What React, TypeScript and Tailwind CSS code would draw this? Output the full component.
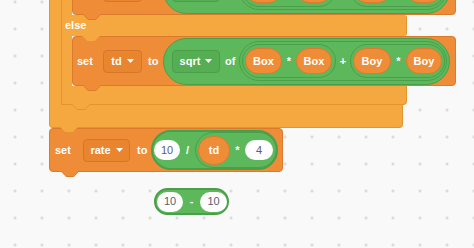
import clsx from 'clsx';
import * as React from 'react';

type Kids = { className?: string; children?: React.ReactNode };

function Word({ className, children }: Kids) {
  return (
    <span className={clsx('shrink-0 whitespace-nowrap text-[11px] font-bold leading-none text-white', className)}>
      {children}
    </span>
  );
}

function Op({ className, children }: Kids) {
  return (
    <span className={clsx('shrink-0 text-center text-[11px] font-bold leading-none text-white', className)}>
      {children}
    </span>
  );
}

function Dropdown({ label, className }: { label: string; className?: string }) {
  return (
    <div
      className={clsx(
        'flex h-[23px] shrink-0 items-center justify-center gap-[5px] rounded-[4px] border',
        className,
      )}
    >
      <span className="text-[11px] font-bold leading-none text-white">{label}</span>
      <svg width="7" height="4" viewBox="0 0 7 4">
        <path d="M0 0h7L3.5 4z" fill="#fff" />
      </svg>
    </div>
  );
}

function VarPill({ className, children }: Kids) {
  return (
    <div
      className={clsx(
        'flex shrink-0 items-center justify-center rounded-full border border-[#dc7b2d] bg-[#ef8c38] text-[11px] font-bold leading-none text-white',
        className,
      )}
    >
      {children}
    </div>
  );
}

function NumPill({ className, children }: Kids) {
  return (
    <div
      className={clsx(
        'flex h-[20px] shrink-0 items-center justify-center rounded-full bg-white text-[11px] leading-none text-[#575e75]',
        className,
      )}
    >
      {children}
    </div>
  );
}

// the little connector tab under a stack block, drawn over the next block
function Tab({ className, control }: { className?: string; control?: boolean }) {
  const fill = control ? '#f5a83f' : '#ef8c38';
  const stroke = control ? '#e0962f' : '#d97a2c';
  return (
    <svg width="18" height="6" viewBox="0 0 18 6" className={clsx('absolute top-full z-10', className)}>
      <path d="M0 0L4.2 4.6Q4.8 5.5 5.8 5.5H12.2Q13.2 5.5 13.8 4.6L18 0Z" fill={fill} />
      <path d="M0.4 0.4L4.2 4.6Q4.8 5.5 5.8 5.5H12.2Q13.2 5.5 13.8 4.6L17.6 0.4" fill="none" stroke={stroke} />
    </svg>
  );
}

function SetDistance() {
  return (
    <div className="relative flex h-[50px] w-[384px] shrink-0 items-center rounded-[4px] border border-[#d97a2c] bg-[#ef8c38] pl-[4px]">
      <Word className="w-[15px]">set</Word>
      <Dropdown label="td" className="ml-[11px] w-[39px] border-[#d5772b] bg-[#e9852f]" />
      <Word className="ml-[6px] w-[9px]">to</Word>
      <div className="ml-[6px] flex h-[47px] w-[287px] shrink-0 items-center rounded-full border border-[#4c9f4a] bg-[#5cb85b] pl-[8px]">
        <Dropdown label="sqrt" className="w-[48px] border-[#4c9f4a] bg-[#55ad54]" />
        <Word className="ml-[5px] w-[10px]">of</Word>
        <div className="ml-[4px] flex h-[40px] w-[208px] shrink-0 items-center rounded-full border border-[#4c9f4a] pl-[2px]">
          <div className="flex h-[34px] w-[94px] shrink-0 items-center rounded-full border border-[#4c9f4a] pl-[2px]">
            <VarPill className="h-[26px] w-[37px]">Box</VarPill>
            <Op className="w-[14px]">*</Op>
            <VarPill className="h-[26px] w-[36px]">Box</VarPill>
          </div>
          <Op className="w-[14px]">+</Op>
          <div className="flex h-[34px] w-[95px] shrink-0 items-center rounded-full border border-[#4c9f4a] pl-[2px]">
            <VarPill className="h-[26px] w-[38px]">Boy</VarPill>
            <Op className="w-[15px]">*</Op>
            <VarPill className="h-[26px] w-[36px]">Boy</VarPill>
          </div>
        </div>
      </div>
      <Tab className="left-[10px]" />
    </div>
  );
}

export default function App() {
  return (
    <div className="flex h-[248px] w-[474px] flex-col items-start overflow-hidden bg-[#f9f9f9] bg-[radial-gradient(circle,#d6d6d6_1px,transparent_1.6px)] bg-[length:27px_27px] bg-[position:1.5px_15.5px] pl-[49px] font-['Liberation_Sans',Arial,sans-serif]">
      <div className="-mt-[35px] flex flex-col items-start">
        {/* outer C block */}
        <div className="flex">
          <div className="w-[12px] shrink-0 border-l border-[#e0962f] bg-[#f5a83f]" />
          {/* inner if / else block */}
          <div className="flex flex-col items-start border-l border-[#e0962f]">
            <div className="flex">
              <div className="w-[10px] shrink-0 bg-[#f5a83f]" />
              <SetDistance />
            </div>
            <div className="relative flex h-[21px] w-[345px] items-center rounded-r-[3px] border-r border-[#e0962f] bg-[#f5a83f] pl-[3px]">
              <Word>else</Word>
              <Tab className="left-[20px]" control />
            </div>
            <div className="flex">
              <div className="w-[10px] shrink-0 bg-[#f5a83f]" />
              <SetDistance />
            </div>
            <div className="relative h-[19px] w-[345px] rounded-br-[4px] border-r border-b border-[#e0962f] bg-[#f5a83f]">
              <Tab className="left-[10px]" control />
            </div>
          </div>
        </div>
        <div className="relative h-[23px] w-[354px] rounded-b-[4px] border border-t-0 border-[#e0962f] bg-[#f5a83f]">
          <Tab className="left-[10px]" control />
        </div>

        <div className="relative flex h-[44px] w-[234px] items-center rounded-[4px] border border-[#d97a2c] bg-[#ef8c38] pl-[5px]">
          <Word className="w-[15px]">set</Word>
          <Dropdown label="rate" className="ml-[13px] w-[47px] border-[#d5772b] bg-[#e9852f]" />
          <Word className="ml-[7px] w-[10px]">to</Word>
          <div className="ml-[4px] flex h-[40px] w-[127px] shrink-0 items-center rounded-full border-2 border-[#4c9f4a] bg-[#5cb85b] pl-[1px]">
            <NumPill className="w-[26px]">10</NumPill>
            <Op className="w-[15px]">/</Op>
            <div className="flex h-[36px] w-[82px] shrink-0 items-center rounded-full border border-[#4c9f4a] pl-[2px]">
              <VarPill className="h-[29px] w-[32px]">td</VarPill>
              <Op className="w-[15px]">*</Op>
              <NumPill className="w-[28px]">4</NumPill>
            </div>
          </div>
          <Tab className="left-[11px]" />
        </div>

        <div className="ml-[105px] mt-[16px] flex h-[27px] w-[75px] items-center rounded-full border-2 border-[#4c9f4a] bg-[#5cb85b] pl-[1px]">
          <NumPill className="w-[26px]">10</NumPill>
          <Op className="w-[17px]">-</Op>
          <NumPill className="w-[27px]">10</NumPill>
        </div>
      </div>
    </div>
  );
}
